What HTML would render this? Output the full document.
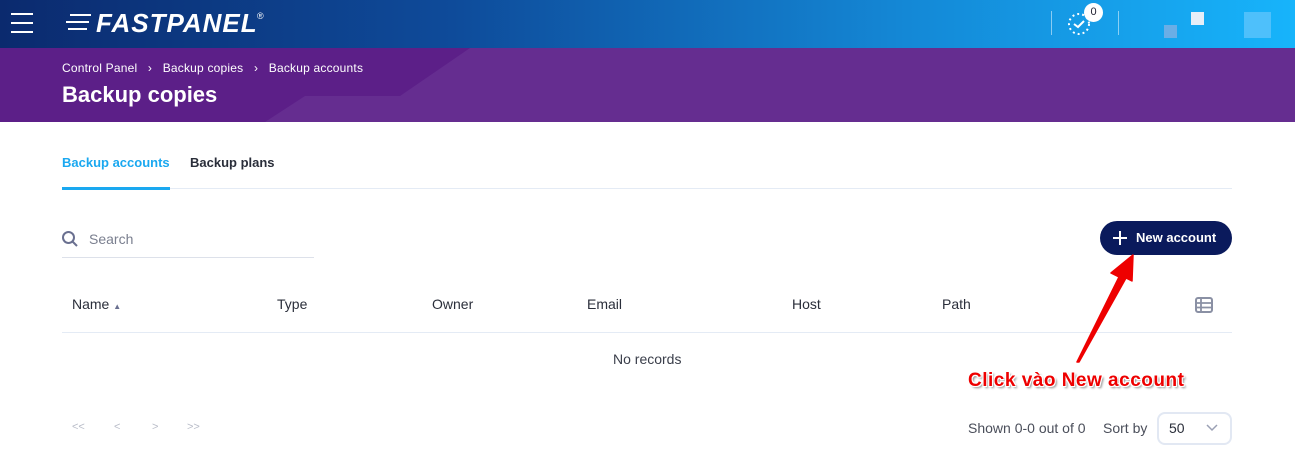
<!DOCTYPE html>
<html><head><meta charset="utf-8"><style>
*{margin:0;padding:0;box-sizing:border-box}
body{width:1295px;height:468px;overflow:hidden;background:#fff;font-family:"Liberation Sans",Arial,sans-serif;position:relative;color:#2a2e3a}
.top{position:absolute;left:0;top:0;width:1295px;height:48px;background:linear-gradient(90deg,#0b2a6e 0%,#0e4b9a 35%,#1488d6 70%,#17b4fb 100%)}
.band{position:absolute;left:0;top:48px;width:1295px;height:74px;background:#652d90;overflow:hidden}
.a{position:absolute;color:#fff;white-space:nowrap}
.t{position:absolute;white-space:nowrap;font-size:14px}
</style></head><body>
<div class="top">
 <div style="position:absolute;left:11px;top:13px;width:22px;height:2px;background:#fff"></div>
 <div style="position:absolute;left:11px;top:22px;width:22px;height:2px;background:#fff"></div>
 <div style="position:absolute;left:11px;top:31px;width:22px;height:2px;background:#fff"></div>
 <svg style="position:absolute;left:64px;top:12px" width="30" height="22"><g stroke="#fff" stroke-width="2"><line x1="6" y1="3" x2="27" y2="3"/><line x1="2" y1="10" x2="25" y2="10"/><line x1="4" y1="17" x2="23" y2="17"/></g></svg>
 <div class="a" style="left:96px;top:8px;font-size:26px;font-weight:bold;font-style:italic;letter-spacing:1px">FASTPANEL</div>
 <div class="a" style="left:257px;top:11px;font-size:9px">®</div>
 <div style="position:absolute;left:1051px;top:11px;width:1px;height:24px;background:rgba(255,255,255,.5)"></div>
 <div style="position:absolute;left:1118px;top:11px;width:1px;height:24px;background:rgba(255,255,255,.5)"></div>
 <svg style="position:absolute;left:1066px;top:10px" width="28" height="28"><circle cx="13" cy="14" r="10" fill="none" stroke="#fff" stroke-width="2" stroke-dasharray="2 3"/><path d="M8 14l4 3 6-6" fill="none" stroke="#fff" stroke-width="2"/></svg>
 <div style="position:absolute;left:1084px;top:3px;width:19px;height:19px;border-radius:50%;background:#fff;color:#223;font-size:11px;text-align:center;line-height:19px">0</div>
 <div style="position:absolute;left:1164px;top:25px;width:13px;height:13px;background:#6aaee6"></div>
 <div style="position:absolute;left:1191px;top:12px;width:13px;height:13px;background:#e6eef8"></div>
 <div style="position:absolute;left:1244px;top:12px;width:27px;height:26px;background:#4ec0fb"></div>
</div>
<div class="band">
 <div style="position:absolute;left:0;top:0;width:470px;height:74px;background:#5c1f88;clip-path:polygon(0 0,470px 0,400px 48px,305px 48px,265px 74px,0 74px)"></div>
 <div class="a" style="left:62px;top:13px;font-size:12px;letter-spacing:0.2px">Control Panel &nbsp;&nbsp;›&nbsp;&nbsp; Backup copies &nbsp;&nbsp;›&nbsp;&nbsp; Backup accounts</div>
 <div class="a" style="left:62px;top:34px;font-size:22px;font-weight:bold">Backup copies</div>
</div>
<div class="t" style="left:62px;top:155px;color:#1aa8f0;font-weight:bold;font-size:13px">Backup accounts</div>
<div class="t" style="left:190px;top:155px;font-weight:bold;color:#2a2e3a;font-size:13px">Backup plans</div>
<div style="position:absolute;left:62px;top:188px;width:1170px;height:1px;background:#e4ebf5"></div>
<div style="position:absolute;left:62px;top:187px;width:108px;height:3px;background:#1aa8f0"></div>
<svg style="position:absolute;left:61px;top:230px" width="18" height="18"><circle cx="7.5" cy="7.5" r="5.5" fill="none" stroke="#6a7090" stroke-width="2"/><line x1="11.5" y1="11.5" x2="16" y2="16" stroke="#6a7090" stroke-width="2"/></svg>
<div class="t" style="left:89px;top:231px;color:#7a7f8f">Search</div>
<div style="position:absolute;left:62px;top:257px;width:252px;height:1px;background:#dde1ea"></div>
<div style="position:absolute;left:1100px;top:221px;width:132px;height:34px;border-radius:17px;background:#0a1a5c;color:#fff;font-size:13px;font-weight:bold;line-height:33px;padding-left:36px">New account</div>
<svg style="position:absolute;left:1113px;top:231px" width="14" height="14"><path d="M7 0v14M0 7h14" stroke="#fff" stroke-width="2"/></svg>
<div class="t" style="left:72px;top:296px">Name <span style="font-size:8px;color:#6a7090">▲</span></div>
<div class="t" style="left:277px;top:296px">Type</div>
<div class="t" style="left:432px;top:296px">Owner</div>
<div class="t" style="left:587px;top:296px">Email</div>
<div class="t" style="left:792px;top:296px">Host</div>
<div class="t" style="left:942px;top:296px">Path</div>
<svg style="position:absolute;left:1195px;top:297px" width="18" height="16"><rect x="1" y="1" width="16" height="14" rx="2" fill="none" stroke="#8a90a4" stroke-width="2"/><path d="M1 6h16M1 10.5h16M6 1v14" stroke="#8a90a4" stroke-width="1.8"/></svg>
<div style="position:absolute;left:62px;top:332px;width:1170px;height:1px;background:#e4ebf5"></div>
<div class="t" style="left:613px;top:351px;color:#3a3e4a">No records</div>
<div class="t" style="left:72px;top:421px;font-size:11px;color:#b8bcc8">&lt;&lt;</div>
<div class="t" style="left:114px;top:421px;font-size:11px;color:#b8bcc8">&lt;</div>
<div class="t" style="left:152px;top:421px;font-size:11px;color:#b8bcc8">&gt;</div>
<div class="t" style="left:187px;top:421px;font-size:11px;color:#b8bcc8">&gt;&gt;</div>
<div class="t" style="left:968px;top:420px;color:#4a4e5a">Shown 0-0 out of 0</div>
<div class="t" style="left:1103px;top:420px;color:#4a4e5a">Sort by</div>
<div style="position:absolute;left:1157px;top:412px;width:75px;height:33px;border:2px solid #e2e8f3;border-radius:8px"></div>
<div class="t" style="left:1169px;top:420px;color:#2a2e3a">50</div>
<svg style="position:absolute;left:1206px;top:424px" width="12" height="8"><path d="M1 1l5 5 5-5" fill="none" stroke="#9aa0b4" stroke-width="1.5"/></svg>
<svg style="position:absolute;left:0;top:0" width="1295" height="468"><path d="M1077 362L1119 277 1111 273 1133 255 1132 281 1126 278 1079 362z" fill="#e00" stroke="#e00" stroke-width="1.5" stroke-linejoin="round"/></svg>
<div class="t" style="left:968px;top:370px;font-size:19px;font-weight:bold;letter-spacing:0.5px;color:#e00;text-shadow:1px 1px 0 #fff,-1px -1px 0 #fff,1px -1px 0 #fff,-1px 1px 0 #fff,2px 2px 2px #888">Click vào New account</div>
</body></html>
